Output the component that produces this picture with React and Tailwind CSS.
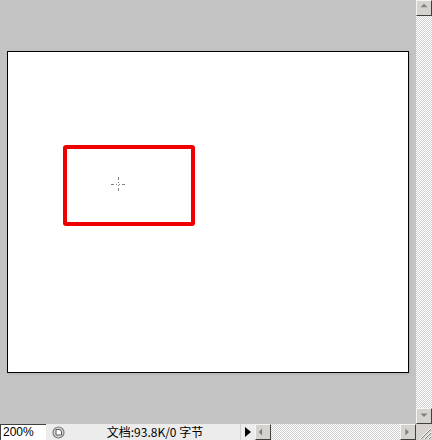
import React from "react";

const checker =
  "bg-[image:repeating-conic-gradient(#cfcfcf_0_25%,#ffffff_0_50%)] bg-[length:2px_2px]";

function ScrollButton({ dir, className = "" }) {
  const tri = {
    up: "M4 7 L8 3 L12 7 Z",
    down: "M4 5 L8 9 L12 5 Z",
    left: "M7 4 L3 8 L7 12 Z",
    right: "M5 4 L9 8 L5 12 Z",
  }[dir];
  return (
    <div
      className={`w-[16px] h-[16px] shrink-0 bg-[#d6d3ce] border-t border-l border-t-[#f4f4f4] border-l-[#f4f4f4] border-b border-r border-b-[#404040] border-r-[#404040] flex items-center justify-center ${className}`}
    >
      <svg width="14" height="14" viewBox="0 0 16 16">
        <path d={tri} fill="#808080" />
      </svg>
    </div>
  );
}

export default function App() {
  return (
    <div className="w-[432px] h-[440px] flex flex-col bg-[#c3c3c3] overflow-hidden font-['Liberation_Sans','Noto_Sans_CJK_SC',sans-serif]">
      <div className="flex h-[424px]">
        <div className="flex-1 bg-[#c3c3c3] pt-[51px] pl-[7px]">
          <div className="relative w-[402px] h-[322px] bg-white border border-black shadow-[1px_1px_2px_rgba(0,0,0,0.1)]">
            <div className="absolute left-[55px] top-[93px] w-[132px] h-[81px] border-[4px] border-[#ee0000] rounded-[3px]" />
            <svg
              className="absolute left-[103px] top-[125px]"
              width="14"
              height="14"
              viewBox="0 0 14 14"
            >
              <g stroke="#808080" strokeWidth="1">
                <line x1="7.5" y1="0" x2="7.5" y2="3" />
                <line x1="7.5" y1="5" x2="7.5" y2="6" />
                <line x1="7.5" y1="8" x2="7.5" y2="9" />
                <line x1="7.5" y1="11" x2="7.5" y2="14" />
                <line x1="0" y1="7.5" x2="3" y2="7.5" />
                <line x1="5" y1="7.5" x2="6" y2="7.5" />
                <line x1="8" y1="7.5" x2="9" y2="7.5" />
                <line x1="11" y1="7.5" x2="14" y2="7.5" />
              </g>
            </svg>
          </div>
        </div>
        <div className="w-[16px] flex flex-col">
          <ScrollButton dir="up" />
          <div className={`flex-1 ${checker}`} />
          <ScrollButton dir="down" />
        </div>
      </div>
      <div className="flex h-[16px] bg-[#ececec] items-stretch">
        <div className="w-[46px] h-[16px] bg-white border-t border-l border-[#404040] text-[12px] leading-[14px] pl-[2px] text-black">
          200%
        </div>
        <div className="w-[24px] flex items-center justify-center">
          <svg width="13" height="13" viewBox="0 0 13 13">
            <circle cx="6.5" cy="6.5" r="5.5" fill="#d8d8d8" stroke="#7a7a7a" strokeWidth="1.2" />
            <path d="M4 3.5 H7 A2.5 2.5 0 0 1 9.5 6 V9 H4 Z" fill="#fff" stroke="#555" strokeWidth="1" />
          </svg>
        </div>
        <div className="w-[170px] flex items-center justify-center text-[12px] leading-[14px] text-black font-['Noto_Sans_CJK_SC',sans-serif]">
          文档:93.8K/0 字节
        </div>
        <div className="w-[15px] flex items-center justify-center bg-[#ececec] border-l border-[#d0d0d0]">
          <svg width="8" height="12" viewBox="0 0 8 12">
            <path d="M1 1 L7 6 L1 11 Z" fill="#000" />
          </svg>
        </div>
        <ScrollButton dir="left" />
        <div className={`flex-1 ${checker}`} />
        <ScrollButton dir="right" />
        <div className="w-[16px] h-[16px] bg-[#d6d3ce] relative overflow-hidden">
          <svg width="16" height="16" viewBox="0 0 16 16" className="absolute inset-0">
            <g strokeWidth="1">
              <line x1="15" y1="4" x2="4" y2="15" stroke="#fff" />
              <line x1="15" y1="5" x2="5" y2="15" stroke="#808080" />
              <line x1="15" y1="8" x2="8" y2="15" stroke="#fff" />
              <line x1="15" y1="9" x2="9" y2="15" stroke="#808080" />
              <line x1="15" y1="12" x2="12" y2="15" stroke="#fff" />
              <line x1="15" y1="13" x2="13" y2="15" stroke="#808080" />
            </g>
          </svg>
        </div>
      </div>
    </div>
  );
}
